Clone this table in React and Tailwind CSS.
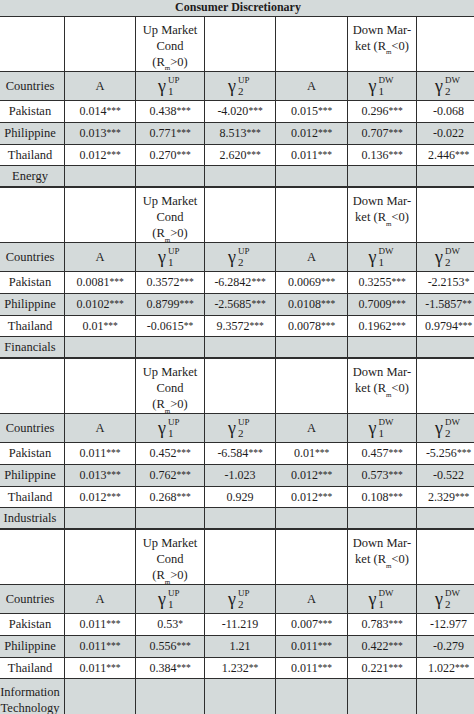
import React from "react";

const sections = [
  {
    label: "Energy",
    rows: [
      ["Pakistan", "0.014***", "0.438***", "-4.020***", "0.015***", "0.296***", "-0.068"],
      ["Philippine", "0.013***", "0.771***", "8.513***", "0.012***", "0.707***", "-0.022"],
      ["Thailand", "0.012***", "0.270***", "2.620***", "0.011***", "0.136***", "2.446***"],
    ],
  },
  {
    label: "Financials",
    rows: [
      ["Pakistan", "0.0081***", "0.3572***", "-6.2842***", "0.0069***", "0.3255***", "-2.2153*"],
      ["Philippine", "0.0102***", "0.8799***", "-2.5685***", "0.0108***", "0.7009***", "-1.5857**"],
      ["Thailand", "0.01***", "-0.0615**", "9.3572***", "0.0078***", "0.1962***", "0.9794***"],
    ],
  },
  {
    label: "Industrials",
    rows: [
      ["Pakistan", "0.011***", "0.452***", "-6.584***", "0.01***", "0.457***", "-5.256***"],
      ["Philippine", "0.013***", "0.762***", "-1.023", "0.012***", "0.573***", "-0.522"],
      ["Thailand", "0.012***", "0.268***", "0.929", "0.012***", "0.108***", "2.329***"],
    ],
  },
  {
    label: "Information Technology",
    rows: [
      ["Pakistan", "0.011***", "0.53*", "-11.219", "0.007***", "0.783***", "-12.977"],
      ["Philippine", "0.011***", "0.556***", "1.21", "0.011***", "0.422***", "-0.279"],
      ["Thailand", "0.011***", "0.384***", "1.232**", "0.011***", "0.221***", "1.022***"],
    ],
  },
];

const cell = "border border-[#2e2e2e] text-center p-0";
const gray = "bg-[#d4dada]";

function Val({ v }) {
  const m = v.match(/^([^*]*)(\**)$/);
  const num = m ? m[1] : v;
  const stars = m ? m[2] : "";
  return (
    <span className="text-[12px]">
      {num}
      {stars && <span className="text-[9.5px] align-[1px]">{stars}</span>}
    </span>
  );
}

function Gamma({ sub, sup }) {
  const w = sup === "DW" ? "w-[27px]" : "w-[24px]";
  return (
    <div className={`relative mx-auto h-[21px] ${w}`}>
      <span className="absolute left-0 top-[2px] text-[18px] leading-[18px]">γ</span>
      <span className="absolute left-[10px] top-[1px] text-[9px] leading-[9px]">{sup}</span>
      <span className="absolute left-[10px] top-[11px] text-[11px] leading-[11px]">{sub}</span>
    </div>
  );
}

function Section({ s }) {
  const label = s.label;
  return (
    <>
      <tr className="h-[55px] bg-white">
        <td className={cell}></td>
        <td className={cell}></td>
        <td className={`${cell} align-top pt-[5px] leading-[16px]`}>
          Up Market
          <br />
          Cond
          <br />
          (R<sub className="text-[7px] align-[-3px]">m</sub>&gt;0)
        </td>
        <td className={cell}></td>
        <td className={cell}></td>
        <td className={`${cell} align-top pt-[5px] leading-[16px]`}>
          Down Mar-
          <br />
          ket (R<sub className="text-[7px] align-[-3px]">m</sub>&lt;0)
        </td>
        <td className={cell}></td>
      </tr>
      <tr className={`h-[29px] ${gray}`}>
        <td className={cell}>Countries</td>
        <td className={cell}>A</td>
        <td className={cell}>
          <Gamma sub="1" sup="UP" />
        </td>
        <td className={cell}>
          <Gamma sub="2" sup="UP" />
        </td>
        <td className={cell}>A</td>
        <td className={cell}>
          <Gamma sub="1" sup="DW" />
        </td>
        <td className={cell}>
          <Gamma sub="2" sup="DW" />
        </td>
      </tr>
      {s.rows.map((r, i) => (
        <tr key={i} className={`${i === 2 ? "h-[21px]" : "h-[22px]"} ${i === 1 ? gray : "bg-white"}`}>
          <td className={cell}>{r[0]}</td>
          {r.slice(1).map((v, j) => (
            <td key={j} className={`${cell} whitespace-nowrap`}>
              <Val v={v} />
            </td>
          ))}
        </tr>
      ))}
      {label === "Information Technology" ? (
        <tr className={`h-[60px] ${gray}`}>
          <td className={`${cell} align-top pt-[5px] leading-[16px]`}>{label}</td>
          <td className={cell}></td>
          <td className={cell}></td>
          <td className={cell}></td>
          <td className={cell}></td>
          <td className={cell}></td>
          <td className={cell}></td>
        </tr>
      ) : (
        <tr className={`h-[22px] ${gray}`}>
          <td className={`${cell} border-b-2`}>{label}</td>
          <td className={`${cell} border-b-2`}></td>
          <td className={`${cell} border-b-2`}></td>
          <td className={`${cell} border-b-2`}></td>
          <td className={`${cell} border-b-2`}></td>
          <td className={`${cell} border-b-2`}></td>
          <td className={`${cell} border-b-2`}></td>
        </tr>
      )}
    </>
  );
}

export default function App() {
  return (
    <div className="w-[474px] h-[714px] overflow-hidden bg-white text-[#1e1c1c]">
      <table
        className="table-fixed border-collapse -ml-[5px] w-[485px] text-[12.5px] leading-[14px]"
        style={{ fontFamily: '"Liberation Serif", "Times New Roman", serif' }}
      >
        <colgroup>
          <col className="w-[69px]" />
          <col className="w-[71px]" />
          <col className="w-[69px]" />
          <col className="w-[71px]" />
          <col className="w-[72px]" />
          <col className="w-[69px]" />
          <col className="w-[64px]" />
        </colgroup>
        <tbody>
          <tr className={`h-[16px] ${gray}`}>
            <td colSpan={7} className={`${cell} border-t-0 font-bold leading-[15px] text-[12px]`}>
              Consumer Discretionary
            </td>
          </tr>
          {sections.map((s, i) => (
            <Section key={i} s={s} />
          ))}
        </tbody>
      </table>
    </div>
  );
}
